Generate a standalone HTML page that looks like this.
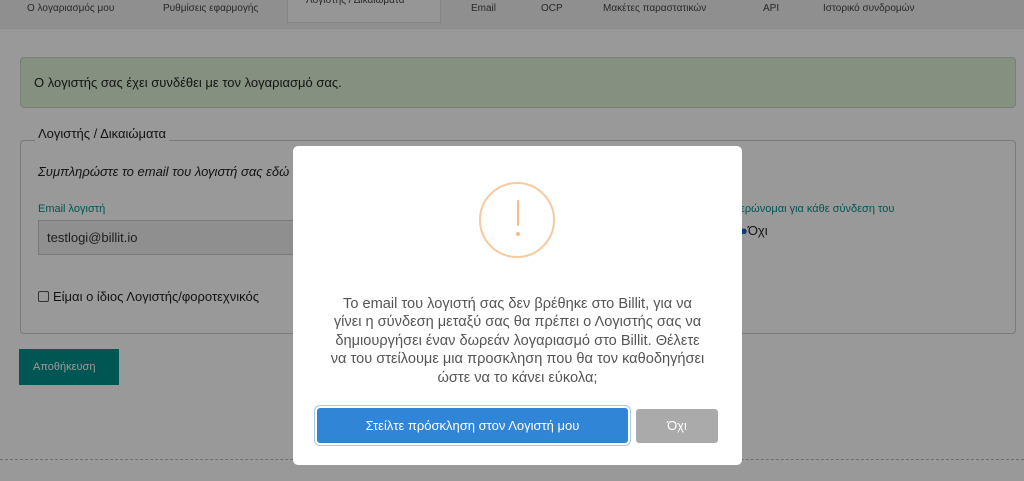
<!DOCTYPE html>
<html><head><meta charset="utf-8"><style>
*{box-sizing:border-box;margin:0;padding:0}
body{width:1024px;height:481px;overflow:hidden;background:#fff;font-family:"Liberation Sans","DejaVu Sans",sans-serif;position:relative;color:#333}
.tabs{position:absolute;left:0;top:0;width:1024px;height:29px;background:#efefef;border-bottom:1px solid #e6e6e6}
.tab{position:absolute;top:0;font-size:10px;color:#444;line-height:14px}
.active{position:absolute;left:287px;top:-2px;width:154px;height:25px;background:#fafafa;border:1px solid #ddd}
.alert{position:absolute;left:20px;top:57px;width:996px;height:51px;background:#dff0d8;border:1px solid #c3d9c3;border-radius:4px;font-size:13px;color:#222;padding:17px 13px}
.fs{position:absolute;left:20px;top:140px;width:996px;height:194px;border:1px solid #ccc;border-radius:4px}
.legend{position:absolute;left:35px;top:126px;background:#fff;padding:0 3px;font-size:13px;color:#222}
.abs{position:absolute}
.input{left:38px;top:220px;width:300px;height:35px;border:1px solid #ccc;background:#eee;font-size:13px;padding:9px 8px;color:#333}
.save{left:19px;top:349px;width:100px;height:36px;background:#00908a;color:#fff;font-size:11px;padding:12px 14px}
.dash{left:0;top:459px;width:1024px;border-top:1px dashed #bbb}
.ov{position:absolute;left:0;top:0;width:1024px;height:481px;background:rgba(0,0,0,0.4)}
.modal{position:absolute;left:293px;top:146px;width:449px;height:319px;background:#fff;border-radius:5px}
.circ{position:absolute;left:186px;top:36px;width:76px;height:76px;border:2px solid #f8c99e;border-radius:50%}
.bar{position:absolute;left:36px;top:16px;width:2px;height:26px;background:#f8bb86;border-radius:1px}
.dot{position:absolute;left:35px;top:48px;width:4px;height:4px;background:#f8bb86;border-radius:50%}
.msg{position:absolute;left:10px;top:149px;width:429px;text-align:center;font-size:14.6px;line-height:18.4px;color:#555;white-space:nowrap}
.b1{position:absolute;left:24px;top:262px;width:311px;height:35px;background:#3085d6;color:#fff;font-size:13px;text-align:center;line-height:35px;border-radius:3px;box-shadow:0 0 0 2px #fff,0 0 0 3px #a9c8ea}
.b2{position:absolute;left:343px;top:263px;width:82px;height:34px;background:#aaa;color:#fff;font-size:13px;text-align:center;line-height:34px;border-radius:3px}
.cb{display:inline-block;width:11px;height:11px;border:1px solid #555;border-radius:2px;vertical-align:-1px;margin-right:4px;background:#fff}
</style></head><body>
<div class="tabs">
<div class="active"></div>
<div class="tab" style="left:27px;top:2px">Ο λογαριασμός μου</div>
<div class="tab" style="left:163px;top:2px">Ρυθμίσεις εφαρμογής</div>
<div class="tab" style="left:306px;top:-6px">Λογιστής / Δικαιώματα</div>
<div class="tab" style="left:471px;top:2px">Email</div>
<div class="tab" style="left:541px;top:2px">OCP</div>
<div class="tab" style="left:603px;top:2px">Μακέτες παραστατικών</div>
<div class="tab" style="left:763px;top:2px">API</div>
<div class="tab" style="left:823px;top:2px">Ιστορικό συνδρομών</div>
</div>
<div class="alert">Ο λογιστής σας έχει συνδέθει με τον λογαριασμό σας.</div>
<div class="fs"></div>
<div class="legend">Λογιστής / Δικαιώματα</div>
<div class="abs" style="left:38px;top:164px;font-size:13px;font-style:italic;color:#222">Συμπληρώστε το email του λογιστή σας εδώ</div>
<div class="abs" style="left:38px;top:203px;font-size:11px;color:#00908a">Email λογιστή</div>
<div class="abs input">testlogi@billit.io</div>
<div class="abs" style="left:38px;top:289px;font-size:13px;color:#222"><span class="cb"></span>Είμαι ο ίδιος Λογιστής/φοροτεχνικός</div>
<div class="abs" style="left:740px;top:203px;font-size:11px;color:#00908a">ερώνομαι για κάθε σύνδεση του</div>
<div class="abs" style="left:740px;top:223px;font-size:13px;color:#222"><span style="color:#1a5fd0">●</span>Όχι</div>
<div class="abs save">Αποθήκευση</div>
<div class="abs dash"></div>
<div class="ov"></div>
<div class="modal">
<div class="circ"><div class="bar"></div><div class="dot"></div></div>
<div class="msg">Το email του λογιστή σας δεν βρέθηκε στο Billit, για να<br>γίνει η σύνδεση μεταξύ σας θα πρέπει ο Λογιστής σας να<br>δημιουργήσει έναν δωρεάν λογαριασμό στο Billit. Θέλετε<br>να του στείλουμε μια προσκληση που θα τον καθοδηγήσει<br>ώστε να το κάνει εύκολα;</div>
<div class="b1">Στείλτε πρόσκληση στον Λογιστή μου</div>
<div class="b2">Όχι</div>
</div>
</body></html>
